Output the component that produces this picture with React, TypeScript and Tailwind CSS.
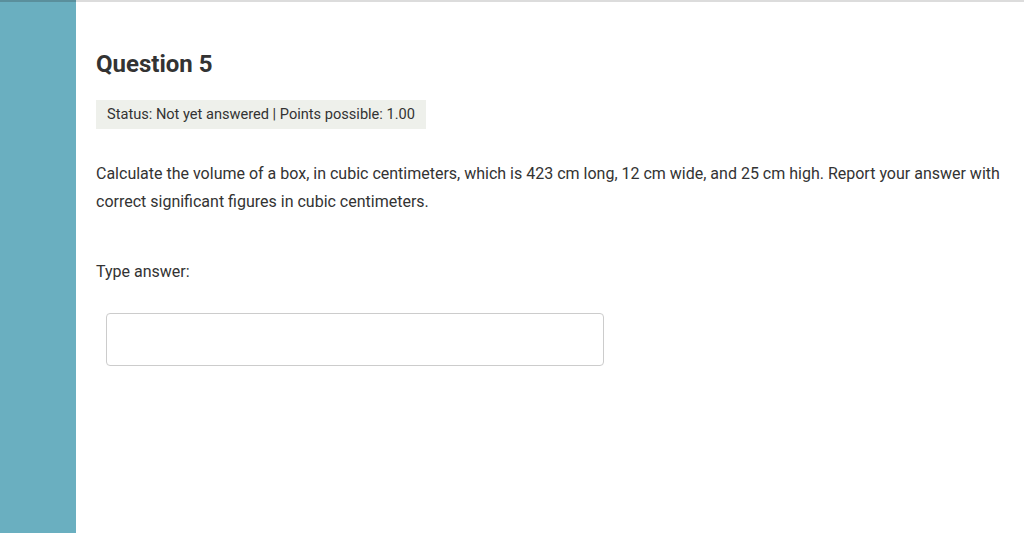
import React from "react";

export default function App() {
  return (
    <div className="flex h-[533px] w-[1024px] overflow-hidden bg-white" style={{ fontFamily: "Roboto, 'Liberation Sans', sans-serif" }}>
      <div className="w-[76px] shrink-0 bg-[#6aafc0] border-t-2 border-[#5a8f9c]" />
      <div className="flex-1 border-t-2 border-[#dcdcdc] pl-[20px] pr-[20px] text-[#333]">
        <h1 className="mt-[47px] text-[24px] font-bold leading-[30px] text-[#333]">Question 5</h1>
        <div className="mt-[21px] inline-block bg-[#eef0eb] px-[11px] py-[5px] text-[14.6px] leading-[19px] text-[#333]">
          Status: Not yet answered | Points possible: 1.00
        </div>
        <p className="mt-[31px] text-[16px] leading-[28px] text-[#333]">
          Calculate the volume of a box, in cubic centimeters, which is 423 cm long, 12 cm wide, and 25 cm high. Report your answer with correct significant figures in cubic centimeters.
        </p>
        <p className="mt-[42px] text-[16px] leading-[28px] text-[#333]">Type answer:</p>
        <div className="mt-[27px] ml-[10px] h-[53px] w-[498px] rounded-[4px] border border-[#cccccc] bg-white" />
      </div>
    </div>
  );
}
